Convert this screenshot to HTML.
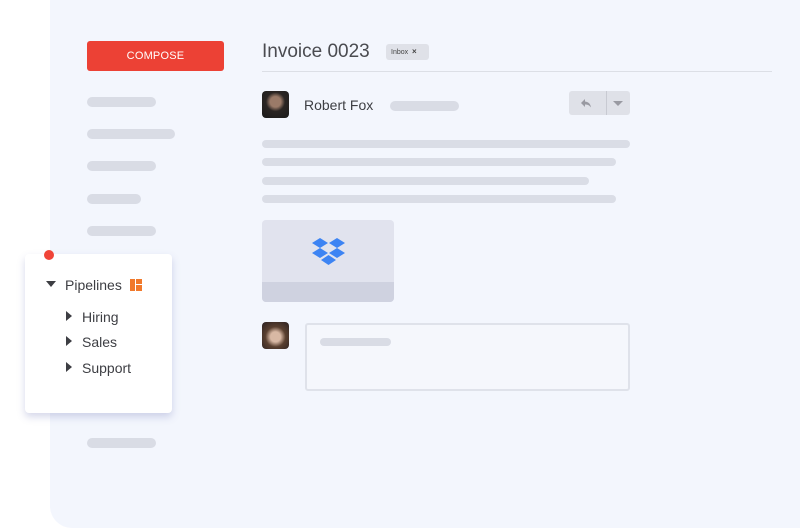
<!DOCTYPE html>
<html><head><style>
*{margin:0;padding:0;box-sizing:border-box}
body{width:800px;height:528px;background:#fff;position:relative;overflow:hidden;font-family:"Liberation Sans",Arial,sans-serif}
.panel{position:absolute;left:50px;top:-20px;width:780px;height:548px;background:#f3f6fd;border-radius:22px}
.a{position:absolute}
.bar{position:absolute;height:10px;border-radius:5px;background:#d9dce5}
.lbar{position:absolute;height:8px;border-radius:4px;background:#dadde6}
</style></head><body>
<div class="panel"></div>
<div class="a" style="left:87px;top:41px;width:137px;height:30px;background:#ec4135;border-radius:3px;color:#fff;font-size:11px;text-align:center;line-height:30px;letter-spacing:.2px">COMPOSE</div>
<div class="bar" style="left:87px;top:97px;width:69px"></div>
<div class="bar" style="left:87px;top:129px;width:88px"></div>
<div class="bar" style="left:87px;top:161px;width:69px"></div>
<div class="bar" style="left:87px;top:194px;width:54px"></div>
<div class="bar" style="left:87px;top:226px;width:69px"></div>
<div class="bar" style="left:87px;top:438px;width:69px"></div>

<div class="a" style="left:262px;top:41px;font-size:19px;color:#4a4b50">Invoice 0023</div>
<div class="a" style="left:386px;top:44px;width:43px;height:16px;background:#dfe1e8;border-radius:3px;font-size:7px;color:#444;line-height:16px;padding-left:5px">Inbox&nbsp;&nbsp;<b style="font-size:8px">×</b></div>
<div class="a" style="left:262px;top:71px;width:510px;height:1px;background:#dcdfe6"></div>

<div class="a" style="left:262px;top:91px;width:27px;height:27px;border-radius:4px;background:radial-gradient(circle at 50% 40%,#9a7a68 0 25%,#2a2523 45%,#1a1a1a)"></div>
<div class="a" style="left:304px;top:97px;font-size:14px;color:#3d3e43">Robert Fox</div>
<div class="a" style="left:390px;top:101px;width:69px;height:10px;border-radius:5px;background:#d9dce5"></div>
<div class="a" style="left:569px;top:91px;width:61px;height:24px;background:#dfe1e8;border-radius:3px"></div>
<div class="a" style="left:606px;top:91px;width:1px;height:24px;background:#c8cad2"></div>
<svg class="a" style="left:579px;top:96px" width="14" height="14" viewBox="0 0 14 14"><path d="M6 3 L2 7 L6 11 V8.5 C9 8.5 10.5 9.5 12 11.5 C11.5 8 9.5 5.8 6 5.5Z" fill="#999aa2"/></svg>
<div class="a" style="left:613px;top:101px;border-left:5px solid transparent;border-right:5px solid transparent;border-top:5px solid #999aa2"></div>

<div class="lbar" style="left:262px;top:140px;width:368px"></div>
<div class="lbar" style="left:262px;top:158px;width:354px"></div>
<div class="lbar" style="left:262px;top:177px;width:327px"></div>
<div class="lbar" style="left:262px;top:195px;width:354px"></div>

<div class="a" style="left:262px;top:220px;width:132px;height:82px;border-radius:4px;background:#e1e3ee;overflow:hidden"><div style="position:absolute;left:0;top:62px;width:132px;height:20px;background:#cfd2e0"></div></div>
<svg class="a" style="left:312px;top:238px" width="33" height="28" viewBox="0 0 33 28"><g fill="#3d84f3"><path d="M8 0 L16 5 L8 10 L0 5Z"/><path d="M25 0 L33 5 L25 10 L17 5Z"/><path d="M8 10 L16 15 L8 20 L0 15Z"/><path d="M25 10 L33 15 L25 20 L17 15Z"/><path d="M16.5 17 L24 22 L16.5 27 L9 22Z"/></g></svg>

<div class="a" style="left:262px;top:322px;width:27px;height:27px;border-radius:4px;background:radial-gradient(circle at 50% 55%,#d8b8a4 0 25%,#5a4030 50%,#2a2020)"></div>
<div class="a" style="left:305px;top:323px;width:325px;height:68px;border:2px solid #dfe2ea;border-radius:3px;background:#f5f7fc"></div>
<div class="a" style="left:320px;top:338px;width:71px;height:8px;border-radius:4px;background:#d9dce5"></div>

<div class="a" style="left:25px;top:254px;width:147px;height:159px;background:#fff;border-radius:4px;box-shadow:0 4px 8px rgba(90,100,170,.25)"></div>
<div class="a" style="left:44px;top:250px;width:10px;height:10px;border-radius:50%;background:#f04438"></div>
<div class="a" style="left:46px;top:281px;border-left:5px solid transparent;border-right:5px solid transparent;border-top:6px solid #3d3e43"></div>
<div class="a" style="left:65px;top:277px;font-size:14px;color:#3d3e43">Pipelines</div>
<div class="a" style="left:130px;top:279px;width:12px;height:12px">
<div class="a" style="left:0;top:0;width:5px;height:12px;background:#f1792b"></div>
<div class="a" style="left:6px;top:0;width:6px;height:5px;background:#f1792b"></div>
<div class="a" style="left:6px;top:6px;width:6px;height:6px;background:#f1792b"></div></div>
<div class="a" style="left:66px;top:311px;border-top:5px solid transparent;border-bottom:5px solid transparent;border-left:6px solid #3d3e43"></div>
<div class="a" style="left:82px;top:309px;font-size:14px;color:#3d3e43">Hiring</div>
<div class="a" style="left:66px;top:336px;border-top:5px solid transparent;border-bottom:5px solid transparent;border-left:6px solid #3d3e43"></div>
<div class="a" style="left:82px;top:334px;font-size:14px;color:#3d3e43">Sales</div>
<div class="a" style="left:66px;top:362px;border-top:5px solid transparent;border-bottom:5px solid transparent;border-left:6px solid #3d3e43"></div>
<div class="a" style="left:82px;top:360px;font-size:14px;color:#3d3e43">Support</div>
</body></html>
